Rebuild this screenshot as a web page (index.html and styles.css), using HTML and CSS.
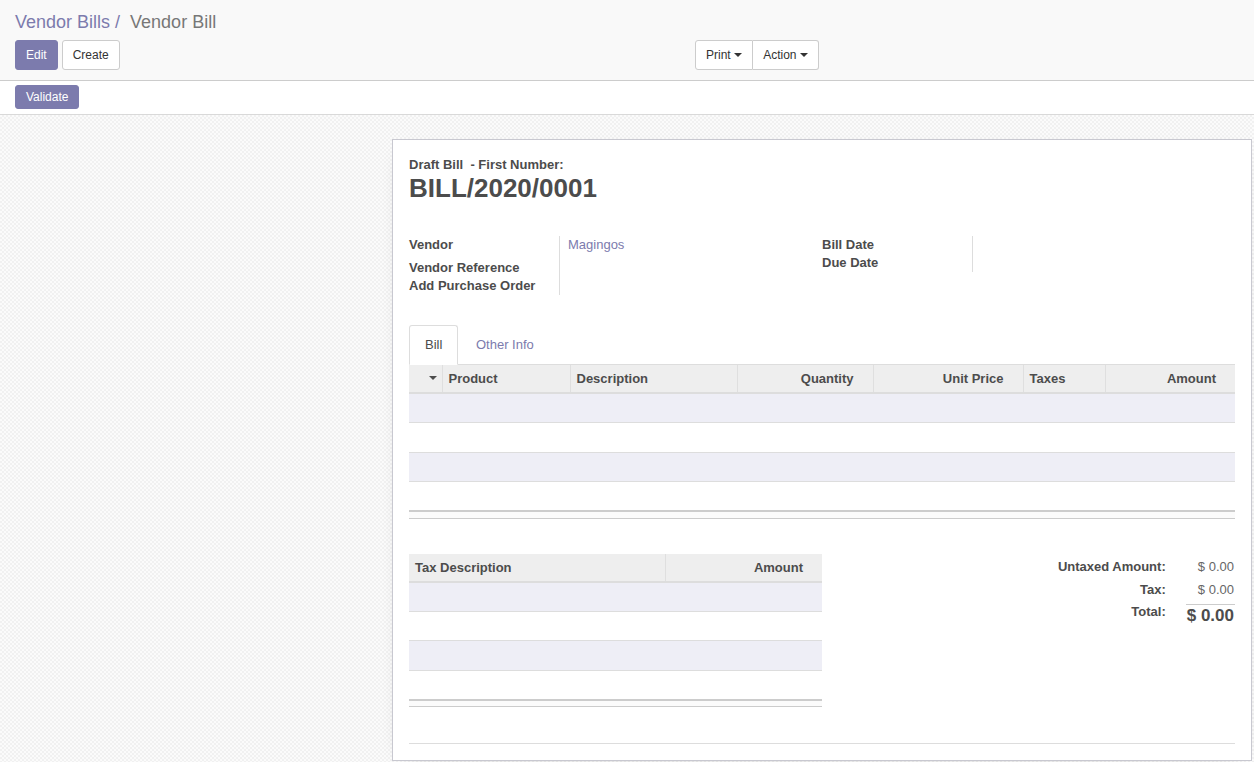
FILE: index.html
```html
<!DOCTYPE html>
<html>
<head>
<meta charset="utf-8">
<title>Vendor Bill</title>
<link rel="stylesheet" href="styles.css">
</head>
<body>
<div class="control-panel">
  <div class="breadcrumb">
    <a class="crumb-link">Vendor Bills</a><span class="crumb-sep">/</span><span class="crumb-active">Vendor Bill</span>
  </div>
  <div class="cp-row">
    <div class="cp-left">
      <button class="btn btn-primary btn-cp">Edit</button>
      <button class="btn btn-secondary btn-cp">Create</button>
    </div>
    <div class="btn-group">
      <button class="btn btn-secondary btn-cp btn-print">Print <span class="caret"></span></button>
      <button class="btn btn-secondary btn-cp btn-action">Action <span class="caret"></span></button>
    </div>
  </div>
</div>
<div class="statusbar">
  <button class="btn btn-primary btn-sm">Validate</button>
</div>
<div class="content">
  <div class="sheet">
    <div class="subtitle">Draft Bill&nbsp; - First Number:</div>
    <h1 class="title">BILL/2020/0001</h1>

    <div class="groups">
      <div class="group">
        <div class="g-label g-first">Vendor</div>
        <div class="g-value g-first"><a class="link">Magingos</a></div>
        <div class="g-label">Vendor Reference</div>
        <div class="g-value"></div>
        <div class="g-label">Add Purchase Order</div>
        <div class="g-value"></div>
      </div>
      <div class="group">
        <div class="g-label">Bill Date</div>
        <div class="g-value"></div>
        <div class="g-label">Due Date</div>
        <div class="g-value"></div>
      </div>
    </div>

    <div class="tabs">
      <div class="tab active">Bill</div>
      <div class="tab">Other Info</div>
    </div>

    <table class="list lines">
      <colgroup>
        <col class="c-handle"><col class="c-product"><col class="c-desc"><col class="c-qty"><col class="c-price"><col class="c-taxes"><col class="c-amount">
      </colgroup>
      <thead>
        <tr>
          <th class="handle"><span class="sort-caret"></span></th>
          <th>Product</th>
          <th>Description</th>
          <th class="num">Quantity</th>
          <th class="num">Unit Price</th>
          <th>Taxes</th>
          <th class="num">Amount</th>
        </tr>
      </thead>
      <tbody>
        <tr class="odd"><td></td><td></td><td></td><td></td><td></td><td></td><td></td></tr>
        <tr><td></td><td></td><td></td><td></td><td></td><td></td><td></td></tr>
        <tr class="odd"><td></td><td></td><td></td><td></td><td></td><td></td><td></td></tr>
        <tr><td></td><td></td><td></td><td></td><td></td><td></td><td></td></tr>
      </tbody>
      <tfoot>
        <tr><td colspan="7"></td></tr>
      </tfoot>
    </table>

    <div class="bottom">
      <table class="list taxes">
        <colgroup><col class="c-taxdesc"><col class="c-taxamount"></colgroup>
        <thead>
          <tr><th>Tax Description</th><th class="num">Amount</th></tr>
        </thead>
        <tbody>
          <tr class="odd"><td></td><td></td></tr>
          <tr><td></td><td></td></tr>
          <tr class="odd"><td></td><td></td></tr>
          <tr><td></td><td></td></tr>
        </tbody>
        <tfoot>
          <tr><td colspan="2"></td></tr>
        </tfoot>
      </table>
      <div class="totals">
        <div class="t-label">Untaxed Amount:</div>
        <div class="t-value">$ 0.00</div>
        <div class="t-label">Tax:</div>
        <div class="t-value">$ 0.00</div>
        <div class="t-label t-total-label">Total:</div>
        <div class="t-value t-total">$ 0.00</div>
      </div>
    </div>

    <div class="notes"></div>
  </div>
</div>
</body>
</html>
```

FILE: styles.css
```css
* { box-sizing: border-box; }

html, body {
  margin: 0;
  padding: 0;
  height: 100%;
}

body {
  font-family: "Liberation Sans", Arial, sans-serif;
  font-size: 13px;
  color: #4c4c4c;
  background-color: #f9f9f9;
  overflow: hidden;
}

/* ---------- control panel ---------- */
.control-panel {
  background: #f9f9f9;
  border-bottom: 1px solid #cccccc;
  padding: 8px 15px 10px 15px;
  height: 81px;
}

.breadcrumb {
  font-size: 18px;
  line-height: 28px;
  height: 28px;
  margin-bottom: 4px;
  white-space: nowrap;
}

.crumb-link { color: #7c7bad; }
.crumb-sep { color: #7c7bad; padding: 0 10px 0 5px; }
.crumb-active { color: #777777; }

.cp-row {
  display: flex;
  align-items: center;
  height: 30px;
}

.cp-left {
  flex: 0 0 680px;
  display: flex;
  gap: 4px;
}

.btn {
  font-family: "Liberation Sans", Arial, sans-serif;
  font-size: 12px;
  border-radius: 3px;
  cursor: pointer;
  margin: 0;
  white-space: nowrap;
}

.btn-cp {
  height: 30px;
  padding: 0 10px;
  line-height: 28px;
}

.btn-primary {
  background: #7c7bad;
  border: 1px solid #7c7bad;
  color: #ffffff;
}

.btn-secondary {
  background: #ffffff;
  border: 1px solid #cccccc;
  color: #333333;
}

.btn-group { display: flex; }
.btn-print { border-radius: 3px 0 0 3px; width: 58px; padding: 0; }
.btn-action { border-radius: 0 3px 3px 0; border-left: none; width: 66px; padding: 0; }

.caret {
  display: inline-block;
  width: 0;
  height: 0;
  border-left: 4px solid transparent;
  border-right: 4px solid transparent;
  border-top: 4px solid #333333;
  vertical-align: middle;
  position: relative;
  top: -1px;
}

/* ---------- status bar ---------- */
.statusbar {
  background: #ffffff;
  border-bottom: 1px solid #d9d9d9;
  padding: 4px 15px 5px 15px;
  height: 34px;
}

.btn-sm {
  height: 24px;
  line-height: 22px;
  padding: 0 10px;
  width: 64px;
}

/* ---------- content ---------- */
.content {
  background-color: #fafafa;
  background-image: repeating-conic-gradient(#f1f1f1 0 25%, #fbfbfb 0 50%);
  background-size: 4px 4px;
  padding-top: 24px;
  height: calc(100% - 115px);
}

.sheet {
  margin-left: 392px;
  margin-right: 2px;
  background: #ffffff;
  border: 1px solid #c8c8d0;
  box-shadow: 0 5px 20px -15px rgba(0,0,0,0.4);
  padding: 17px 16px 16px 16px;
}

.subtitle {
  font-weight: bold;
  line-height: 16px;
  height: 16px;
}

.title {
  margin: 0;
  font-size: 26px;
  line-height: 30px;
  font-weight: bold;
  color: #4c4c4c;
}

/* ---------- groups ---------- */
.groups {
  margin-top: 33px;
  display: grid;
  grid-template-columns: 1fr 1fr;
}

.group {
  display: grid;
  grid-template-columns: 151px 1fr;
  align-content: start;
  grid-auto-rows: 18px;
}

.group:first-child { grid-template-rows: 23px 18px 18px; }

.g-label {
  font-weight: bold;
  line-height: 18px;
  border-right: 1px solid #dddddd;
  white-space: nowrap;
}

.g-value {
  line-height: 18px;
  padding-left: 8px;
}

.link { color: #7c7bad; }

/* ---------- tabs ---------- */
.tabs {
  margin-top: 30px;
  display: flex;
  border-bottom: 1px solid #dddddd;
  height: 40px;
}

.tab {
  height: 40px;
  line-height: 38px;
  padding: 0 15px;
  color: #7c7bad;
  border: 1px solid transparent;
  border-radius: 3px 3px 0 0;
  margin-right: 2px;
}

.tab.active {
  color: #4c4c4c;
  background: #ffffff;
  border-color: #dddddd;
  border-bottom-color: #ffffff;
  width: 49px;
}

/* ---------- lists ---------- */
.list {
  border-collapse: collapse;
  table-layout: fixed;
}

.lines { width: 100%; }

.c-handle { width: 33px; }
.c-product { width: 128px; }
.c-desc { width: 167px; }
.c-qty { width: 136px; }
.c-price { width: 150px; }
.c-taxes { width: 82px; }
.c-amount { width: 130px; }

.list th {
  background: #eeeeee;
  height: 28px;
  padding: 0 6px;
  font-weight: bold;
  text-align: left;
  border-left: 1px solid #dfdfdf;
  border-bottom: 2px solid #dddddd;
  white-space: nowrap;
  line-height: 27px;
}

.list th:first-child { border-left: none; }

.list th.num { text-align: right; padding-right: 19px; }

.list th.handle { text-align: right; padding-right: 5px; }

.sort-caret {
  display: inline-block;
  width: 0;
  height: 0;
  border-left: 4px solid transparent;
  border-right: 4px solid transparent;
  border-top: 4px solid #4c4c4c;
  vertical-align: middle;
  position: relative;
  top: -2px;
}

.list td {
  height: 29.5px;
  padding: 0;
  border-bottom: 1px solid #dddddd;
}

.list tr.odd td { background: #eeeef6; }

.list tfoot td {
  height: 7px;
  border-top: 2px solid #cccccc;
  border-bottom: 1px solid #cccccc;
  background: #fbfbfb;
}

/* ---------- bottom ---------- */
.bottom {
  margin-top: 35px;
  display: flex;
  align-items: flex-start;
}

.taxes { width: 413px; flex: 0 0 413px; }
.c-taxdesc { width: 256px; }
.c-taxamount { width: 157px; }

.totals {
  flex: 1;
  display: grid;
  grid-template-columns: 1fr auto;
  column-gap: 20px;
  align-items: start;
  padding-top: 1px;
}

.t-label {
  text-align: right;
  font-weight: bold;
  line-height: 23px;
  padding-right: 0;
}

.t-value {
  text-align: right;
  line-height: 23px;
  color: #666666;
  padding-right: 1px;
}

.t-total-label {
  margin-top: 3px;
  line-height: 16px;
}

.t-total {
  margin-top: 3px;
  border-top: 1px solid #cccccc;
  font-size: 17px;
  font-weight: bold;
  color: #4c4c4c;
  line-height: 22px;
  padding-left: 1px;
}

.notes {
  margin-top: 36px;
  border-top: 1px solid #dddddd;
  height: 1px;
}
```
